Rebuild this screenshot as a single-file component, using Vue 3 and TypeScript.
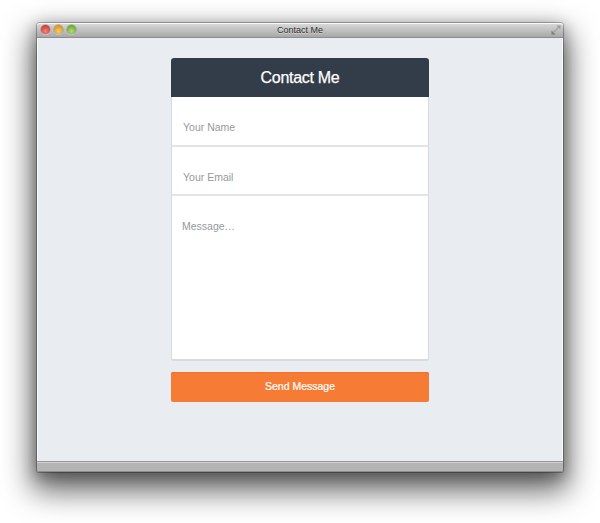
<script setup lang="ts">
const title = 'Contact Me'
const lights = ['red', 'amber', 'green']
</script>

<template>
  <div class="stage">
    <div class="window">
      <header class="titlebar">
        <div class="lights">
          <span v-for="l in lights" :key="l" class="light" :class="l"></span>
        </div>
        <span class="wintitle">{{ title }}</span>
        <svg class="expand" width="10" height="10" viewBox="0 0 10 10">
          <path d="M5.5 0.5H9.5V4.5Z" fill="#9a9a9a" />
          <path d="M0.5 5.5V9.5H4.5Z" fill="#7a7a7a" />
          <path d="M2.5 7.5L7.5 2.5" stroke="#a0a0a0" stroke-width="1.2" />
        </svg>
      </header>
      <main class="content">
        <form class="form" @submit.prevent>
          <div class="card">
            <h1 class="heading">Contact Me</h1>
            <div class="field name">Your Name</div>
            <div class="field email">Your Email</div>
            <div class="field message">Message…</div>
          </div>
          <button class="send" type="submit">Send Message</button>
        </form>
      </main>
      <footer class="statusbar"></footer>
    </div>
  </div>
</template>

<style>
html, body { margin: 0; background: #fff; }
</style>

<style scoped>
.stage {
  width: 600px;
  height: 523px;
  box-sizing: border-box;
  padding: 23px 37px 51px;
  background: #fff;
  overflow: hidden;
  font-family: "Liberation Sans", Arial, sans-serif;
}
.window {
  height: 449px;
  display: flex;
  flex-direction: column;
  border-radius: 3px 3px 2px 2px;
  box-shadow:
    0 14px 30px 5px rgba(0, 0, 0, 0.6),
    0 4px 14px 2px rgba(0, 0, 0, 0.25),
    0 0 0 1px rgba(120, 120, 120, 0.5);
}
.titlebar {
  position: relative;
  box-sizing: border-box;
  height: 15px;
  flex: none;
  display: flex;
  align-items: center;
  justify-content: center;
  background: linear-gradient(#e8e8e8 0, #d4d4d4 12%, #a8a8a8 100%);
  border-radius: 3px 3px 0 0;
  border-bottom: 1px solid #8d8d8d;
  box-shadow: inset 0 1px 0 #f8f8f8;
}
.lights {
  position: absolute;
  left: 4px;
  top: 2px;
  display: flex;
  gap: 4px;
}
.light {
  width: 9px;
  height: 9px;
  border-radius: 50%;
  box-shadow: 0 0 0 0.5px rgba(80, 80, 80, 0.5), 0 1px 0 rgba(255, 255, 255, 0.5);
}
.red { background: radial-gradient(circle at 50% 70%, #f4857c, #cf3a34 75%); }
.amber { background: radial-gradient(circle at 50% 70%, #f7cd70, #d9921f 75%); }
.green { background: radial-gradient(circle at 50% 70%, #b2de74, #6aa633 75%); }
.wintitle {
  font-size: 9px;
  color: #2f2f2f;
  text-shadow: 0 1px 0 rgba(255, 255, 255, 0.45);
}
.expand {
  position: absolute;
  right: 2px;
  top: 2px;
}
.content {
  flex: 1;
  display: flex;
  justify-content: center;
  padding-top: 20px;
  background: #e9ecf1;
  box-shadow: inset 1px 0 0 #fafbfc, inset -1px 0 0 #fafbfc;
}
.form {
  width: 258px;
  display: flex;
  flex-direction: column;
  gap: 11px;
}
.card {
  display: flex;
  flex-direction: column;
  background: #fff;
  border-radius: 3px;
}
.heading {
  margin: 0;
  height: 39px;
  line-height: 39px;
  text-align: center;
  font-size: 16px;
  font-weight: 400;
  letter-spacing: -0.3px;
  color: #fff;
  background: #333c49;
  border-radius: 3px 3px 0 0;
  -webkit-text-stroke: 0.25px #fff;
}
.field {
  box-sizing: border-box;
  font-size: 10.5px;
  line-height: 13px;
  color: #97999d;
  background: #fff;
  border-left: 1px solid #d7dade;
  border-right: 1px solid #d7dade;
  border-bottom: 2px solid #e2e4e7;
}
.name {
  height: 50px;
  padding: 24px 11px 0;
}
.email {
  height: 49px;
  padding: 24px 11px 0;
}
.message {
  height: 165px;
  padding: 24px 10px 0;
  border-bottom-color: #d7dade;
  border-radius: 0 0 2px 2px;
}
.send {
  height: 30px;
  padding: 0 0 2px;
  border: 0;
  border-radius: 2px;
  background: #f67c36;
  box-shadow: inset 0 1px 0 #f47026;
  color: #fff;
  font: 400 10.5px "Liberation Sans", Arial, sans-serif;
  -webkit-text-stroke: 0.2px #fff;
}
.statusbar {
  height: 11px;
  flex: none;
  background: #b4b4b4;
  border-top: 1px solid #979797;
  border-bottom: 1px solid #8c8c8c;
  box-sizing: border-box;
  box-shadow: inset 0 1px 0 #d2d2d2;
  border-radius: 0 0 2px 2px;
}
</style>
